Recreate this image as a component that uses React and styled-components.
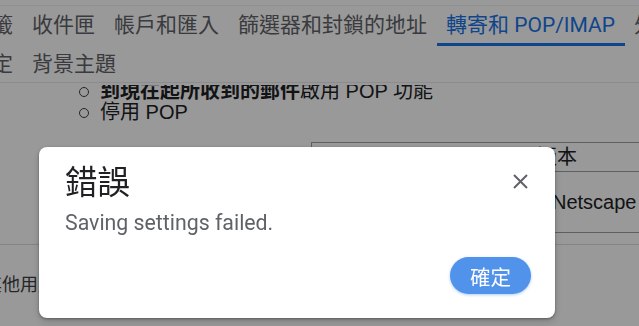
import styled, { createGlobalStyle } from "styled-components";

const GlobalStyle = createGlobalStyle`
  body {
    margin: 0;
    overflow: hidden;
    background: #ffffff;
    font-family: Roboto, "Noto Sans CJK TC", sans-serif;
  }
`;

const Page = styled.div`
  position: relative;
  width: 639px;
  height: 326px;
  overflow: hidden;
  background: #ffffff;
`;

const Header = styled.div`
  margin-top: 5px;
  border-top: 1px solid #eceef0;
`;

const TabRow = styled.div`
  display: flex;
  margin-left: -17px;
  white-space: nowrap;
`;

const Tab = styled.div`
  height: 37px;
  padding: 0 9.5px;
  display: flex;
  align-items: center;
  font-size: 21px;
  line-height: 24px;
  color: ${({ $active }) => ($active ? "#1a73e8" : "#5f6368")};
  border-bottom: 3px solid ${({ $active }) => ($active ? "#1a73e8" : "transparent")};
`;

const SubTabRow = styled.div`
  display: flex;
  height: 36px;
  align-items: center;
  margin-left: -17px;
  border-bottom: 1px solid #e8eaed;
`;

const SubTab = styled.div`
  padding: 0 9.5px;
  font-size: 21px;
  line-height: 24px;
  color: #5f6368;
`;

const Scroller = styled.div`
  margin-top: 2px;
  height: 241px;
  overflow: hidden;
  font-family: "Liberation Sans", "Noto Sans CJK TC", sans-serif;
`;

const RadioList = styled.div`
  margin-top: -4px;
  padding-left: 79px;
`;

const RadioRow = styled.div`
  display: flex;
  align-items: center;
  gap: 11px;
  height: 21px;
  font-size: 20px;
  line-height: 21px;
  color: #202124;
  white-space: nowrap;
`;

const RadioCircle = styled.span`
  width: 8px;
  height: 8px;
  border: 1.5px solid #3c4043;
  border-radius: 50%;
  flex: none;
`;

const Strong = styled.b`
  font-weight: 700;
`;

const Table = styled.div`
  margin: 19px 0 0 311px;
  width: 400px;
  border-top: 1px solid #9aa0a6;
  border-left: 1px solid #9aa0a6;
`;

const TableRow = styled.div`
  display: flex;
  height: ${({ $h }) => $h}px;
  align-items: ${({ $top }) => ($top ? "flex-start" : "center")};
  border-bottom: 1px solid #9aa0a6;
  font-size: 20px;
  line-height: 24px;
  color: #202124;
  white-space: nowrap;
`;

const Cell = styled.div`
  width: ${({ $w }) => $w}px;
  padding-left: ${({ $indent }) => $indent || 0}px;
  padding-top: ${({ $pt }) => $pt || 0}px;
  flex: none;
`;

const Divider = styled.div`
  margin-top: 11px;
  border-top: 1px solid #dadce0;
`;

const FooterNote = styled.div`
  margin: 28px 0 0 -16px;
  font-size: 18px;
  line-height: 24px;
  color: #3c4043;
  white-space: nowrap;
`;

const Scrim = styled.div`
  position: fixed;
  inset: 0;
  background: rgba(0, 0, 0, 0.4);
`;

const Dialog = styled.div`
  position: fixed;
  left: 39px;
  top: 147px;
  width: 516px;
  height: 171px;
  box-sizing: border-box;
  padding: 13px 24px 24px 26px;
  background: #ffffff;
  border-radius: 8px;
  box-shadow: 0 1px 3px rgba(0, 0, 0, 0.35), 0 4px 8px rgba(0, 0, 0, 0.15);
  display: flex;
  flex-direction: column;
`;

const Title = styled.div`
  font-size: 32.5px;
  line-height: 40px;
  color: #202124;
  font-family: "Noto Sans CJK TC", sans-serif;
`;

const Message = styled.div`
  margin-top: 9px;
  font-size: 21.3px;
  line-height: 28px;
  color: #5f6368;
`;

const CloseButton = styled.button`
  position: absolute;
  right: 22px;
  top: 21px;
  width: 26px;
  height: 26px;
  padding: 0;
  border: 0;
  background: transparent;
  display: flex;
  align-items: center;
  justify-content: center;
`;

const Actions = styled.div`
  margin-top: auto;
  display: flex;
  justify-content: flex-end;
`;

const OkButton = styled.button`
  height: 37px;
  padding: 0 20px;
  border: 0;
  border-radius: 19px;
  background: #5192ea;
  color: #ffffff;
  font-family: "Noto Sans CJK TC", sans-serif;
  font-size: 20.5px;
  line-height: 24px;
  box-shadow: 0 1px 3px rgba(26, 115, 232, 0.35);
`;

const tabs = ["標籤", "收件匣", "帳戶和匯入", "篩選器和封鎖的地址", "轉寄和 POP/IMAP", "外掛程式"];

export default function App() {
  return (
    <Page>
      <GlobalStyle />
      <Header>
        <TabRow>
          {tabs.map((t, i) => (
            <Tab key={t} $active={i === 4} style={i === 0 ? { paddingLeft: 0, marginLeft: -12 } : undefined}>
              {t}
            </Tab>
          ))}
        </TabRow>
        <SubTabRow>
          <SubTab style={{ paddingLeft: 0, marginLeft: -12 }}>設定</SubTab>
          <SubTab>背景主題</SubTab>
        </SubTabRow>
      </Header>
      <Scroller>
        <RadioList>
          <RadioRow>
            <RadioCircle />
            <span>
              <Strong>到現在起所收到的郵件</Strong>啟用 POP 功能
            </span>
          </RadioRow>
          <RadioRow>
            <RadioCircle />
            <span>停用 POP</span>
          </RadioRow>
        </RadioList>
        <Table>
          <TableRow $h={28}>
            <Cell $w={223} />
            <Cell $w={120} $indent={2}>版本</Cell>
          </TableRow>
          <TableRow $h={60} $top>
            <Cell $w={223} />
            <Cell $w={150} $indent={17} $pt={18}>Netscape</Cell>
          </TableRow>
        </Table>
        <Divider />
        <FooterNote>其他用戶端</FooterNote>
      </Scroller>
      <Scrim />
      <Dialog role="dialog">
        <Title>錯誤</Title>
        <Message>Saving settings failed.</Message>
        <CloseButton aria-label="關閉">
          <svg width="15" height="15" viewBox="0 0 15 15">
            <path d="M1 1L14 14M14 1L1 14" stroke="#5f6368" strokeWidth="2" fill="none" />
          </svg>
        </CloseButton>
        <Actions>
          <OkButton>確定</OkButton>
        </Actions>
      </Dialog>
    </Page>
  );
}
